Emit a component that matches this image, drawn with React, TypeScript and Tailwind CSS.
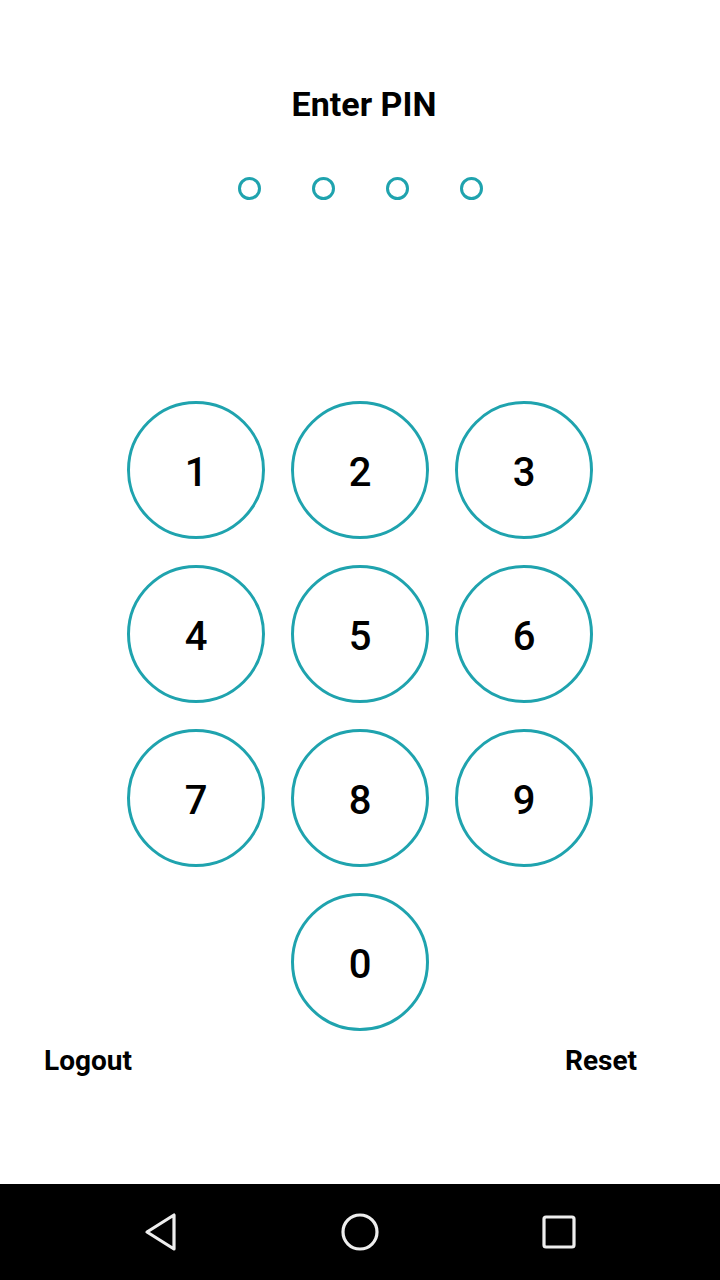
import React from "react";

const keys = ["1", "2", "3", "4", "5", "6", "7", "8", "9"];

function Key({ d }: { d: string }) {
  return (
    <div className="w-[138px] h-[138px] rounded-full border-[3.5px] border-[#1fa3ae] flex items-center justify-center text-[40px] font-medium text-black leading-none pt-[5px]">
      {d}
    </div>
  );
}

export default function App() {
  return (
    <div className="w-[720px] h-[1280px] flex flex-col bg-white" style={{ fontFamily: "Roboto, 'Noto Sans', sans-serif" }}>
      <div className="h-[1184px] flex flex-col items-center">
        <div className="mt-[84px] h-[40px] flex items-center text-[34px] font-bold text-black leading-none pl-[8px]">
          Enter PIN
        </div>
        <div className="mt-[53px] flex gap-[51px]">
          {[0, 1, 2, 3].map((i) => (
            <div key={i} className="w-[23px] h-[23px] rounded-full border-[3.5px] border-[#1fa3ae]" />
          ))}
        </div>
        <div className="mt-[201px] grid grid-cols-[138px_138px_138px] gap-[26px]">
          {keys.map((k) => (
            <Key key={k} d={k} />
          ))}
          <div />
          <Key d="0" />
          <div />
        </div>
        <div className="w-full flex justify-between pl-[44px] pr-[83px] mt-[12px] h-[36px] items-center text-[28px] font-bold text-black">
          <span>Logout</span>
          <span>Reset</span>
        </div>
      </div>
      <div className="h-[96px] bg-black flex items-center">
        <div className="w-full flex justify-between items-center px-[144px]">
          <svg width="34" height="40" viewBox="0 0 34 40">
            <path d="M30 3 L30 37 L3 20 Z" fill="none" stroke="#eee" strokeWidth="3.2" strokeLinejoin="round" />
          </svg>
          <svg width="40" height="40" viewBox="0 0 40 40">
            <circle cx="20" cy="20" r="17" fill="none" stroke="#eee" strokeWidth="3.2" />
          </svg>
          <svg width="34" height="34" viewBox="0 0 34 34">
            <rect x="2" y="2" width="30" height="30" rx="2" fill="none" stroke="#eee" strokeWidth="3.2" />
          </svg>
        </div>
      </div>
    </div>
  );
}
